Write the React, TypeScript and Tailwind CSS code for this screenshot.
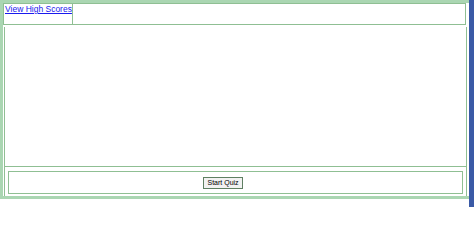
export default function App() {
	return (
		<div className="flex w-[474px] h-[207px] bg-white font-['Liberation_Sans',Arial,sans-serif]">
			<div className="w-[469px] flex flex-col">
				<div className="border-l-[3px] border-t-[3px] border-b-[3px] border-[#aad6b2] pr-[2px] flex flex-col h-[199px]">
					{/* header */}
					<div className="flex h-[22px] border border-[#8fbf93] mr-[1px]">
						<div className="w-[69px] border-r border-[#8fbf93] px-[1px] text-[8.5px] leading-[10px] whitespace-nowrap">
							<a href="#" className="text-[#1a1aee] underline">
								View High Scores
							</a>
						</div>
						<div className="flex-1" />
					</div>
					<div className="h-[2px]" />
					{/* main */}
					<div className="flex-1 border-l border-r border-[#8fbf93] ml-[1px] flex flex-col">
						<div className="flex-1" />
						<div className="border-t border-[#8fbf93] px-[3px] pt-[4px] pb-[2px]">
							<div className="h-[23px] border border-[#8fbf93] flex items-center pl-[194px]">
								<button className="text-[7px] leading-[7px] px-[3.5px] py-[1.5px] bg-[#f2f2f2] border-[1.5px] border-[#5f7f62] text-black whitespace-nowrap">
									Start Quiz
								</button>
							</div>
						</div>
					</div>
				</div>
			</div>
			<div className="w-[5px] h-full bg-[#3a5aa6]" />
		</div>
	);
}
